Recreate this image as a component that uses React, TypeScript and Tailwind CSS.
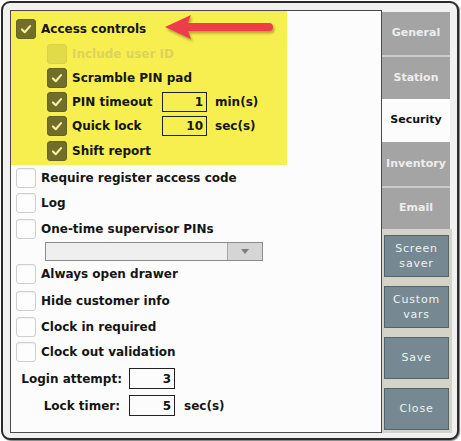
import React from "react";

const font = { fontFamily: '"DejaVu Sans", Verdana, sans-serif' };

function Check({ checked, disabled }: { checked?: boolean; disabled?: boolean }) {
  if (disabled) {
    return <div className="w-[20px] h-[20px] shrink-0 rounded-[3px] bg-[#e2db48] border border-[#d9d245]" />;
  }
  if (checked) {
    return (
      <div className="w-[20px] h-[20px] shrink-0 rounded-[3px] bg-[#716d2b] border border-[#66621f] flex items-center justify-center">
        <svg width="20" height="20" viewBox="0 0 20 20">
          <path d="M5.5 10.5 L8.6 13.6 L14.5 6.8" fill="none" stroke="#f8f39a" strokeWidth="2.3" strokeLinecap="round" strokeLinejoin="round" />
        </svg>
      </div>
    );
  }
  return <div className="w-[20px] h-[20px] shrink-0 rounded-[3px] bg-[#fdfdfd] border border-[#cfcfcf] shadow-[inset_0_1px_1px_rgba(0,0,0,0.05)]" />;
}

function Row({ h, pl, checked, disabled, label }: { h: string; pl: string; checked?: boolean; disabled?: boolean; label: string }) {
  return (
    <div className={`flex items-center gap-[5px] ${h} ${pl}`}>
      <Check checked={checked} disabled={disabled} />
      <span className={`text-[12px] font-bold leading-none ${disabled ? "text-[#dcd45a]" : "text-[#151515]"}`}>{label}</span>
    </div>
  );
}

function NumBox({ value, w, h }: { value: string; w: string; h: string }) {
  return (
    <div className={`${w} ${h} border border-[#222] flex items-center justify-end pr-[3px] text-[12px] font-bold text-[#151515] leading-none`}>
      {value}
    </div>
  );
}

export default function App() {
  return (
    <div className="w-[461px] h-[441px] bg-white pl-[1px] pt-[1px] overflow-hidden" style={font}>
      <div className="w-[458px] h-[439px] rounded-[9px] border-2 border-[#2a2a2a] bg-[#f1f1f1] pl-[7px] pt-[7px] flex shadow-[1px_1px_1px_rgba(0,0,0,0.5)]">
        {/* main panel */}
        <div className="w-[372px] h-[423px] border border-[#4a4a4a] bg-[#fcfcfc] flex flex-col relative">
          <div className="w-[276px] h-[154px] bg-[#f7ef4f] pt-[5px] flex flex-col">
            <Row h="h-[25px]" pl="pl-[5px]" checked label="Access controls" />
            <Row h="h-[25px]" pl="pl-[36px]" disabled label="Include user ID" />
            <Row h="h-[24px]" pl="pl-[36px]" checked label="Scramble PIN pad" />
            <div className="flex items-center h-[23.5px] pl-[36px] gap-[5px]">
              <Check checked />
              <span className="w-[85px] text-[12px] font-bold leading-none text-[#151515]">PIN timeout</span>
              <NumBox value="1" w="w-[45px]" h="h-[20px]" />
              <span className="ml-[3px] text-[12px] font-bold leading-none text-[#151515]">min(s)</span>
            </div>
            <div className="flex items-center h-[24.5px] pl-[36px] gap-[5px]">
              <Check checked />
              <span className="w-[85px] text-[12px] font-bold leading-none text-[#151515]">Quick lock</span>
              <NumBox value="10" w="w-[45px]" h="h-[20px]" />
              <span className="ml-[3px] text-[12px] font-bold leading-none text-[#151515]">sec(s)</span>
            </div>
            <Row h="h-[25px]" pl="pl-[36px]" checked label="Shift report" />
          </div>

          <Row h="h-[25px]" pl="pl-[5px]" label="Require register access code" />
          <Row h="h-[26px]" pl="pl-[5px]" label="Log" />
          <Row h="h-[26px]" pl="pl-[5px]" label="One-time supervisor PINs" />
          <div className="ml-[34px] w-[218px] h-[19px] border border-[#8c8c8c] bg-[#efefef] flex justify-end">
            <div className="w-[35px] h-full bg-[#d5d5d5] border-l border-[#a8a8a8] flex items-center justify-center">
              <svg width="8" height="5" viewBox="0 0 8 5">
                <path d="M0 0 L8 0 L4 5 Z" fill="#7d7d7d" />
              </svg>
            </div>
          </div>
          <Row h="h-[25px]" pl="pl-[5px]" label="Always open drawer" />
          <div className="h-[2px]" />
          <Row h="h-[26px]" pl="pl-[5px]" label="Hide customer info" />
          <Row h="h-[25px]" pl="pl-[5px]" label="Clock in required" />
          <Row h="h-[26px]" pl="pl-[5px]" label="Clock out validation" />

          <div className="flex items-center h-[27px]">
            <span className="w-[111px] text-right text-[12px] font-bold leading-none text-[#151515]">Login attempt:</span>
            <div className="ml-[7px]">
              <NumBox value="3" w="w-[46px]" h="h-[21px]" />
            </div>
          </div>
          <div className="flex items-center h-[27px]">
            <span className="w-[109px] text-right text-[12px] font-bold leading-none text-[#151515]">Lock timer:</span>
            <div className="ml-[9px]">
              <NumBox value="5" w="w-[46px]" h="h-[21px]" />
            </div>
            <span className="ml-[9px] text-[12px] font-bold leading-none text-[#151515]">sec(s)</span>
          </div>

          {/* annotation arrow */}
          <svg className="absolute left-[150px] top-[2px]" width="130" height="34" viewBox="150 2 130 34">
            <defs>
              <filter id="sh" x="-10%" y="-30%" width="130%" height="180%">
                <feGaussianBlur stdDeviation="1.2" />
              </filter>
            </defs>
            <path d="M154 16 L180 4 L177 12 L258 12 A4 4 0 0 1 258 20 L177 20 L180 28 Z" fill="rgba(60,40,0,0.35)" filter="url(#sh)" transform="translate(1.5 2.5)" />
            <path d="M154 16 L180 4 L177 12 L258 12 A4 4 0 0 1 258 20 L177 20 L180 28 Z" fill="#ee3c4b" />
          </svg>
        </div>

        {/* side column */}
        <div className="w-[70px] h-[423px] pt-[2px] flex flex-col">
          <div className="w-[68px] h-[43.4px] bg-[#a4a4a4] flex items-center justify-center text-[11px] font-bold text-[#ededed]">General</div>
          <div className="w-[68px] h-[43.4px] bg-[#a4a4a4] border-t-2 border-[#cbcbcb] flex items-center justify-center text-[11px] font-bold text-[#ededed]">Station</div>
          <div className="w-[68px] h-[43.4px] bg-[#fcfcfc] flex items-center justify-center text-[11px] font-bold text-[#111]">Security</div>
          <div className="w-[68px] h-[43.4px] bg-[#a4a4a4] flex items-center justify-center text-[11px] font-bold text-[#ededed]">Inventory</div>
          <div className="w-[68px] h-[43.4px] bg-[#a4a4a4] border-t-2 border-[#cbcbcb] flex items-center justify-center text-[11px] font-bold text-[#ededed]">Email</div>
          <div className="flex-1 bg-[#d5d2c7] pt-[6px] pl-[2px] flex flex-col gap-[9px]">
            {[["Screen", "saver"], ["Custom", "vars"], ["Save"], ["Close"]].map((lines, i) => (
              <div key={i} className="w-[65px] h-[42px] bg-[#768992] border border-[#52636a] flex flex-col items-center justify-center text-[11px] leading-[15px] tracking-[0.8px] font-medium text-[#eef2f3]">
                {lines.map((l) => (
                  <span key={l}>{l}</span>
                ))}
              </div>
            ))}
          </div>
        </div>
      </div>
    </div>
  );
}
